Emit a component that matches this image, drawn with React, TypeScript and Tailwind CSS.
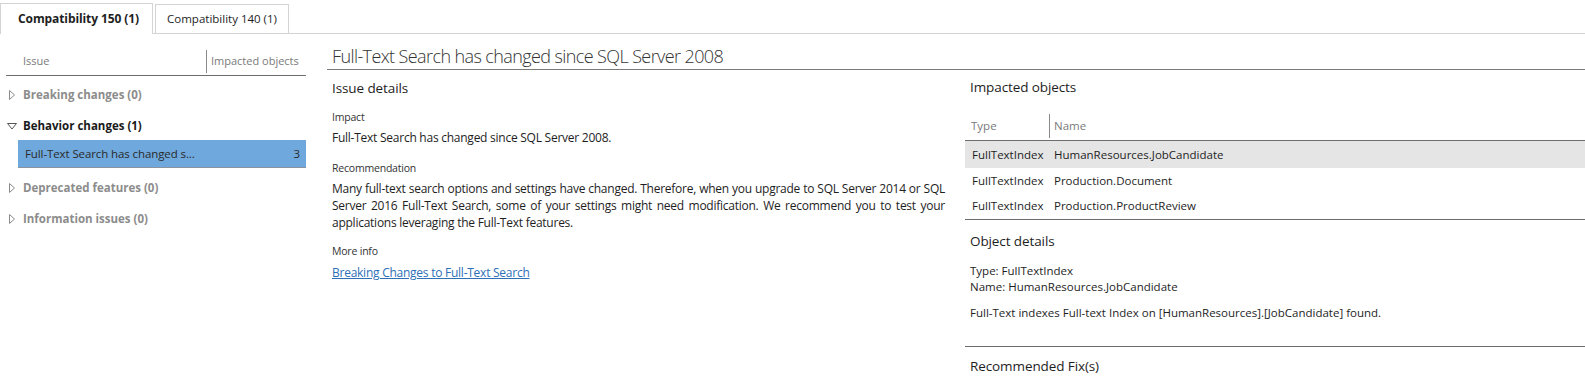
import React from "react";

const FONT = "font-['Open_Sans',sans-serif]";

function Caret({ open, dark }: { open?: boolean; dark?: boolean }) {
  const stroke = dark ? "#555" : "#8a8a8a";
  return (
    <svg width="10" height="10" viewBox="0 0 10 10" className="shrink-0">
      {open ? (
        <polygon points="0.5,2.5 9.5,2.5 5,8" fill="none" stroke={stroke} strokeWidth="1" />
      ) : (
        <polygon points="2.5,0.5 7.5,5 2.5,9.5" fill="none" stroke={stroke} strokeWidth="1" />
      )}
    </svg>
  );
}

function Group({ label, open, dark }: { label: string; open?: boolean; dark?: boolean }) {
  return (
    <div className="flex h-[30px] items-center gap-[6px] pl-[1px]">
      <Caret open={open} dark={dark} />
      <span className={`text-[11.5px] font-bold ${dark ? "text-[#1a1a1a]" : "text-[#8c8c8c]"}`}>
        {label}
      </span>
    </div>
  );
}

const OBJECTS = [
  { type: "FullTextIndex", name: "HumanResources.JobCandidate", selected: true },
  { type: "FullTextIndex", name: "Production.Document" },
  { type: "FullTextIndex", name: "Production.ProductReview" },
];

export default function App() {
  return (
    <div className={`h-[389px] w-[1585px] overflow-hidden bg-white text-[#1e1e1e] ${FONT}`}>
      {/* tabs */}
      <div className="flex h-[34px] items-end border-b border-[#d4d4d4]">
        <div className="-mb-px flex h-[31px] w-[153px] items-center justify-center border border-b-0 border-[#d4d4d4] bg-white pl-[4px] text-[12px] font-bold tracking-[-0.1px]">
          Compatibility 150 (1)
        </div>
        <div className="ml-[2px] flex h-[29px] w-[134px] items-center justify-center border border-b-0 border-[#d4d4d4] bg-white text-[11.5px]">
          Compatibility 140 (1)
        </div>
      </div>

      <div className="flex">
        {/* issue list */}
        <div className="ml-[6px] w-[300px] shrink-0">
          <div className="mt-[13px] flex h-[29px] items-center whitespace-nowrap border-b border-[#6d6d6d] text-[11px] text-[#7a7a7a]">
            <span className="w-[200px] pl-[17px]">Issue</span>
            <span className="h-[23px] w-px bg-[#8a8a8a]" />
            <span className="pl-[4px]">Impacted objects</span>
          </div>
          <div className="mt-[4px]">
            <Group label="Breaking changes (0)" />
          </div>
          <div className="mt-px">
            <Group label="Behavior changes (1)" open dark />
          </div>
          <div className="-mt-px ml-[12px] flex h-[28px] items-center justify-between border-b border-[#8a94a0] bg-[#6fa8dc] pl-[7px] pr-[6px] text-[11.5px] tracking-[-0.1px] text-[#2a2a2a]">
            <span>Full-Text Search has changed s...</span>
            <span>3</span>
          </div>
          <div className="mt-[5px]">
            <Group label="Deprecated features (0)" />
          </div>
          <div className="mt-px">
            <Group label="Information issues (0)" />
          </div>
        </div>

        {/* details */}
        <div className="ml-[21px] min-w-0 flex-1">
          <div className="flex h-[36px] items-end border-b border-[#7a7a7a] pl-[5px]">
            <span className="text-[18px] font-light leading-[26px] tracking-[-0.6px] text-[#333]">
              Full-Text Search has changed since SQL Server 2008
            </span>
          </div>
          <div className="flex">
            <div className="w-[618px] shrink-0 pl-[5px]">
              <div className="mt-[8px] text-[13.5px] leading-[20px] tracking-[-0.1px]">Issue details</div>
              <div className="mt-[11px] text-[10.5px] leading-[16px] tracking-[-0.2px] text-[#333]">Impact</div>
              <div className="mt-[4px] text-[12px] leading-[18px] tracking-[-0.25px]">
                Full-Text Search has changed since SQL Server 2008.
              </div>
              <div className="mt-[13px] text-[10.5px] leading-[16px] tracking-[-0.2px] text-[#333]">
                Recommendation
              </div>
              <p className="mt-[4px] text-justify text-[12px] leading-[17px] tracking-[-0.25px]">
                Many full-text search options and settings have changed. Therefore, when you upgrade to SQL
                Server 2014 or SQL Server 2016 Full-Text Search, some of your settings might need modification.
                We recommend you to test your applications leveraging the Full-Text features.
              </p>
              <div className="mt-[12px] text-[10.5px] leading-[16px] tracking-[-0.2px] text-[#333]">More info</div>
              <a
                href="#"
                className="mt-[5px] block text-[12px] leading-[18px] tracking-[-0.25px] text-[#2e6fb7] underline"
              >
                Breaking Changes to Full-Text Search
              </a>
            </div>

            <div className="ml-[20px] min-w-0 flex-1">
              <div className="mt-[7px] pl-[5px] text-[13.5px] leading-[20px] tracking-[-0.1px]">Impacted objects</div>
              <div className="mt-[15px]">
                <div className="flex h-[29px] items-center border-b border-[#6d6d6d] text-[11.5px] text-[#7a7a7a]">
                  <span className="w-[84px] pl-[6px]">Type</span>
                  <span className="h-[24px] w-px bg-[#8a8a8a]" />
                  <span className="pl-[4px]">Name</span>
                </div>
                {OBJECTS.map((o, i) => (
                  <div
                    key={o.name}
                    className={`flex items-center text-[11.5px] ${i === 0 ? "h-[27px]" : "h-[25px]"} ${
                      o.selected ? "bg-[#e5e5e5]" : ""
                    }`}
                  >
                    <span className="w-[85px] pl-[7px]">{o.type}</span>
                    <span className="pl-[4px]">{o.name}</span>
                  </div>
                ))}
                <div className="mt-px h-px bg-[#6d6d6d]" />
              </div>
              <div className="pl-[5px]">
                <div className="mt-[11px] text-[13.5px] leading-[20px] tracking-[-0.1px]">Object details</div>
                <div className="mt-[12px] text-[11.5px] leading-[16px]">Type: FullTextIndex</div>
                <div className="text-[11.5px] leading-[16px]">Name: HumanResources.JobCandidate</div>
                <div className="mt-[10px] text-[11.5px] leading-[16px]">
                  Full-Text indexes Full-text Index on [HumanResources].[JobCandidate] found.
                </div>
              </div>
              <div className="mt-[25px] h-px bg-[#6d6d6d]" />
              <div className="mt-[9px] pl-[5px] text-[13.5px] leading-[20px] tracking-[-0.1px]">Recommended Fix(s)</div>
            </div>
          </div>
        </div>
      </div>
    </div>
  );
}
